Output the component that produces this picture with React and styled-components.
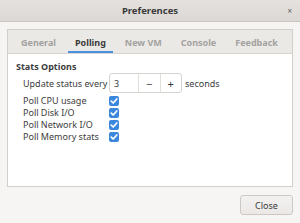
import React, { useState } from "react";
import styled, { createGlobalStyle } from "styled-components";

const Global = createGlobalStyle`
  html, body { margin: 0; padding: 0; }
  body { font-family: "Noto Sans", "DejaVu Sans", sans-serif; font-size: 9px; color: #3d3d3d; }
`;

const Window = styled.div`
  width: 300px;
  height: 223px;
  background: #f6f5f4;
  display: flex;
  flex-direction: column;
  overflow: hidden;
`;

const TitleBar = styled.div`
  height: 21px;
  flex: none;
  display: grid;
  grid-template-columns: 1fr auto 1fr;
  align-items: center;
  background: linear-gradient(#e4e1de, #dcd8d4);
  border-bottom: 1px solid #cbc6c1;
`;

const Title = styled.div`
  grid-column: 2;
  font-weight: bold;
  font-size: 9.5px;
  color: #3a3a3a;
`;

const CloseX = styled.div`
  justify-self: end;
  padding-right: 8px;
  font-size: 8px;
  color: #5a5a5a;
`;

const Body = styled.div`
  flex: 1;
  display: flex;
  flex-direction: column;
  padding: 7px 7px 0 7px;
`;

const Notebook = styled.div`
  height: 156px;
  border: 1px solid #d3cfca;
  display: flex;
  flex-direction: column;
  background: #fff;
`;

const TabBar = styled.div`
  height: 23px;
  flex: none;
  display: flex;
  align-items: stretch;
  gap: 5px;
  padding-left: 6px;
  background: #ebe9e6;
  border-bottom: 1px solid #d9d5d1;
`;

const Tab = styled.div`
  display: flex;
  align-items: center;
  padding: 1px 7px 0;
  font-weight: bold;
  color: ${p => (p.$active ? "#3a3a3a" : "#a3a19f")};
  box-shadow: ${p => (p.$active ? "inset 0 -2px 0 #4a8fe0" : "none")};
`;

const Content = styled.div`
  flex: 1;
  padding: 7px 8px 0;
  display: flex;
  flex-direction: column;
`;

const Section = styled.div`
  font-weight: bold;
  line-height: 12px;
`;

const Grid = styled.div`
  display: grid;
  grid-template-columns: 86px auto;
  align-items: center;
  padding-left: 7px;
`;

const Label = styled.div`
  line-height: 12px;
`;

const SpinRow = styled.div`
  display: flex;
  align-items: center;
  gap: 3px;
  margin-bottom: 2px;
`;

const Spin = styled.div`
  display: flex;
  width: 71px;
  height: 18px;
  border: 1px solid #d6d2ce;
  border-radius: 3px;
  background: #fff;
`;

const SpinValue = styled.div`
  width: 24px;
  padding-left: 4px;
  display: flex;
  align-items: center;
  border-right: 1px solid #e2dfdb;
`;

const SpinBtn = styled.div`
  flex: 1;
  display: flex;
  align-items: center;
  justify-content: center;
  font-size: 11px;
  color: #3a3a3a;
  border-right: ${p => (p.$last ? "none" : "1px solid #e2dfdb")};
`;

const Check = styled.div`
  width: 10px;
  height: 10px;
  border-radius: 2px;
  background: #3c87de;
  display: flex;
  align-items: center;
  justify-content: center;
  margin: 1px 0;
`;

const Footer = styled.div`
  display: flex;
  justify-content: flex-end;
  padding-top: 8px;
`;

const Button = styled.div`
  width: 51px;
  height: 18px;
  border: 1px solid #cdc8c3;
  border-radius: 3px;
  background: linear-gradient(#f4f2f1, #ebe8e6);
  display: flex;
  align-items: center;
  justify-content: center;
  color: #3a3a3a;
`;

function Tick() {
  return (
    <svg width="8" height="8" viewBox="0 0 8 8">
      <path d="M1.3 4.2 L3.2 6 L6.8 2" fill="none" stroke="#fff" strokeWidth="1.7" strokeLinecap="round" strokeLinejoin="round" />
    </svg>
  );
}

const tabs = ["General", "Polling", "New VM", "Console", "Feedback"];
const checks = ["Poll CPU usage", "Poll Disk I/O", "Poll Network I/O", "Poll Memory stats"];

export default function App() {
  const [active] = useState("Polling");
  return (
    <>
      <Global />
      <Window>
        <TitleBar>
          <Title>Preferences</Title>
          <CloseX>×</CloseX>
        </TitleBar>
        <Body>
          <Notebook>
            <TabBar>
              {tabs.map(t => (
                <Tab key={t} $active={t === active}>{t}</Tab>
              ))}
            </TabBar>
            <Content>
              <Section>Stats Options</Section>
              <Grid>
                <Label>Update status every</Label>
                <SpinRow>
                  <Spin>
                    <SpinValue>3</SpinValue>
                    <SpinBtn>−</SpinBtn>
                    <SpinBtn $last>+</SpinBtn>
                  </Spin>
                  <span>seconds</span>
                </SpinRow>
                {checks.map(c => (
                  <React.Fragment key={c}>
                    <Label>{c}</Label>
                    <Check><Tick /></Check>
                  </React.Fragment>
                ))}
              </Grid>
            </Content>
          </Notebook>
          <Footer>
            <Button>Close</Button>
          </Footer>
        </Body>
      </Window>
    </>
  );
}
